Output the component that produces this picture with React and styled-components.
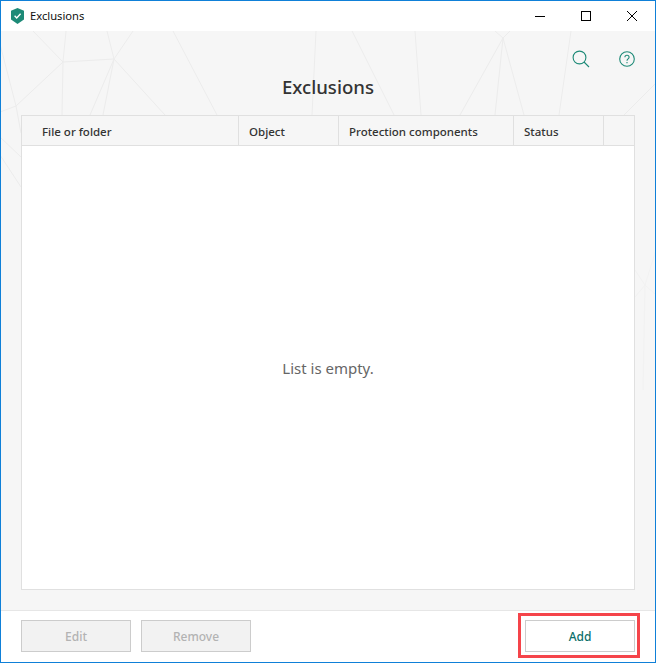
import React from "react";
import styled, { createGlobalStyle } from "styled-components";

const GlobalStyle = createGlobalStyle`
    html, body {
        margin: 0;
        padding: 0;
    }
    body {
        font-family: "Noto Sans", "Open Sans", sans-serif;
    }
`;

const LINES = [
    [33, 31, 63, 62], [66, 31, 63, 62], [63, 62, 114, 59], [107, 31, 114, 59],
    [133, 31, 114, 59], [63, 62, 16, 106], [63, 62, 62, 115], [114, 59, 90, 115],
    [114, 59, 103, 115], [114, 59, 165, 115], [0, 112, 16, 106], [16, 106, 0, 44],
    [16, 106, 21, 133], [0, 137, 21, 157], [0, 155, 21, 187], [173, 31, 217, 115],
    [316, 31, 312, 115], [352, 31, 394, 115], [415, 31, 421, 115], [495, 31, 503, 38],
    [510, 31, 503, 38], [503, 38, 460, 115], [503, 38, 495, 115], [503, 38, 524, 115],
    [571, 31, 559, 115], [656, 83, 624, 115],
];

// barely visible ones in the right margin
const FAINT_LINES = [
    [645, 285, 656, 250], [645, 285, 635, 270], [645, 285, 635, 297],
    [645, 285, 656, 295], [645, 285, 643, 390],
];

const App = () => {
    return (
        <Window>
            <GlobalStyle />
            <TitleBar>
                <ShieldIcon viewBox="0 0 13 16">
                    <path d="M6.5 0 L13 2.8 V11.5 L6.5 16 L0 11.5 V2.8 Z" fill="#1d8a77" />
                    <path d="M3.6 7.8 L5.7 9.9 L9.6 5.8" fill="none" stroke="#fff" strokeWidth="1.4" />
                </ShieldIcon>
                <WindowTitle>Exclusions</WindowTitle>
                <WindowControls>
                    <ControlButton>
                        <svg width="10" height="10" viewBox="0 0 10 10" shapeRendering="crispEdges">
                            <path d="M0 5.5 H10" stroke="#000" fill="none" />
                        </svg>
                    </ControlButton>
                    <ControlButton>
                        <svg width="10" height="10" viewBox="0 0 10 10" shapeRendering="crispEdges">
                            <rect x="0.5" y="0.5" width="9" height="9" stroke="#000" fill="none" />
                        </svg>
                    </ControlButton>
                    <ControlButton>
                        <svg width="10" height="10" viewBox="0 0 10 10">
                            <path d="M0 0 L10 10 M10 0 L0 10" stroke="#000" strokeWidth="1" fill="none" />
                        </svg>
                    </ControlButton>
                </WindowControls>
            </TitleBar>
            <Main>
                <Pattern viewBox="0 31 656 579">
                    {LINES.map((l, i) => (
                        <line key={i} x1={l[0]} y1={l[1]} x2={l[2]} y2={l[3]} stroke="#ececec" strokeWidth="1" />
                    ))}
                    {FAINT_LINES.map((l, i) => (
                        <line key={i} x1={l[0]} y1={l[1]} x2={l[2]} y2={l[3]} stroke="#f2f2f2" strokeWidth="1" />
                    ))}
                </Pattern>
                <TopTools>
                    <ToolButton>
                        <svg width="18" height="18" viewBox="0 0 18 18" fill="none" stroke="currentColor" strokeWidth="1.1">
                            <circle cx="7.5" cy="7.5" r="6.4" />
                            <path d="M12 12 L17 17" />
                        </svg>
                    </ToolButton>
                    <ToolButton>
                        <svg width="16" height="16" viewBox="0 0 16 16" fill="none" stroke="currentColor" strokeWidth="1.1">
                            <circle cx="8" cy="8" r="7.3" />
                            <path d="M5.9 6.2 C5.9 3.6 10.1 3.6 10.1 6.2 C10.1 7.9 8 7.9 8 9.7" />
                            <path d="M8 11 V12.2" />
                        </svg>
                    </ToolButton>
                </TopTools>
                <Heading>Exclusions</Heading>
                <Table>
                    <TableHead>
                        <HeadCell $width={217}>File or folder</HeadCell>
                        <HeadCell $width={100}>Object</HeadCell>
                        <HeadCell $width={175}>Protection components</HeadCell>
                        <HeadCell $width={90}>Status</HeadCell>
                        <HeadCell $width={30} />
                    </TableHead>
                    <TableBody>List is empty.</TableBody>
                </Table>
            </Main>
            <Footer>
                <FooterButton disabled>Edit</FooterButton>
                <FooterButton disabled>Remove</FooterButton>
                <Highlight>
                    <FooterButton>Add</FooterButton>
                </Highlight>
            </Footer>
        </Window>
    );
};

export default App;

const Window = styled.div`
    width: 656px;
    height: 663px;
    box-sizing: border-box;
    border: 1px solid #0f80d8;
    display: flex;
    flex-direction: column;
    background: #fff;
    overflow: hidden;
`;

const TitleBar = styled.div`
    height: 30px;
    flex: none;
    display: flex;
    align-items: center;
    padding-left: 10px;
    background: #fff;
`;

const ShieldIcon = styled.svg`
    width: 13px;
    height: 16px;
    margin-top: -1px;
`;

const WindowTitle = styled.span`
    margin: -2px 0 0 6px;
    font-size: 11.2px;
    color: #111;
`;

const WindowControls = styled.div`
    margin-left: auto;
    display: flex;
`;

const ControlButton = styled.div`
    width: 46px;
    height: 30px;
    display: flex;
    align-items: center;
    justify-content: center;
`;

const Main = styled.div`
    position: relative;
    flex: 1;
    display: flex;
    flex-direction: column;
    padding: 0 20px 20px;
    background: #f6f6f6;
    border-bottom: 1px solid #e6e6e6;
    min-height: 0;
`;

const Pattern = styled.svg`
    position: absolute;
    left: -1px;
    top: 0;
    width: 656px;
    height: 579px;
`;

const TopTools = styled.div`
    position: absolute;
    top: 17px;
    right: 17px;
    display: flex;
    gap: 24px;
    color: #1d8a77;
`;

const ToolButton = styled.div`
    width: 22px;
    height: 22px;
    display: flex;
    align-items: center;
    justify-content: center;
`;

const Heading = styled.h1`
    position: relative;
    margin: 42px 0 14px;
    height: 28px;
    font-size: 18.6px;
    line-height: 28px;
    font-weight: 500;
    text-align: center;
    color: #333;
`;

const Table = styled.div`
    position: relative;
    flex: 1;
    display: flex;
    flex-direction: column;
    border: 1px solid #e0e0e0;
    min-height: 0;
`;

const TableHead = styled.div`
    height: 29px;
    flex: none;
    display: flex;
    background: #f6f6f6;
    border-bottom: 1px solid #e0e0e0;
`;

const HeadCell = styled.div`
    width: ${(p) => p.$width}px;
    box-sizing: border-box;
    flex: none;
    padding-left: 10px;
    border-right: 1px solid #e0e0e0;
    font-size: 11.5px;
    line-height: 31px;
    font-weight: 500;
    color: #333;

    &:first-child {
        padding-left: 20px;
    }
    &:last-child {
        border-right: none;
    }
`;

const TableBody = styled.div`
    flex: 1;
    background: #fff;
    display: flex;
    align-items: center;
    justify-content: center;
    font-size: 15px;
    color: #666;
`;

const Footer = styled.div`
    height: 51px;
    flex: none;
    box-sizing: border-box;
    display: flex;
    align-items: flex-start;
    gap: 10px;
    padding: 9px 20px 0;
    background: #fff;
`;

const FooterButton = styled.button`
    width: 110px;
    height: 32px;
    box-sizing: border-box;
    padding: 0;
    border: 1px solid #ccc;
    background: ${(p) => (p.disabled ? "#f2f2f2" : "#fff")};
    color: ${(p) => (p.disabled ? "#b3b3b3" : "#0c6f6a")};
    font-family: inherit;
    font-size: 12px;
    font-weight: 500;
`;

const Highlight = styled.div`
    margin: -7px -5px 0 auto;
    padding: 4px 2px 3px 4px;
    border: 3px solid #f5444a;
    display: flex;
`;
